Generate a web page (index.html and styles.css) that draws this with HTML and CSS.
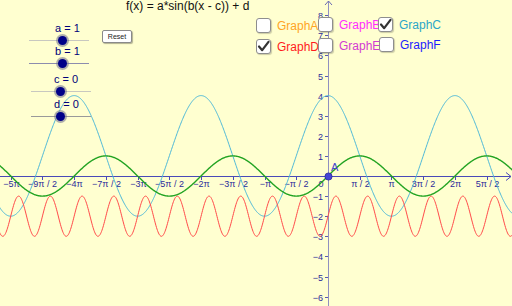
FILE: index.html
```html
<!DOCTYPE html>
<html>
<head>
<meta charset="utf-8">
<link rel="stylesheet" href="styles.css">
</head>
<body>
<div class="applet">
  <svg class="graph" id="graph" width="512" height="306" viewBox="0 0 512 306"></svg>

  <div class="title">f(x) = a*sin(b(x - c)) + d</div>

  <div class="slider slider-a">
    <span class="slider-label">a = 1</span>
    <div class="track track-light"><span class="knob knob-a"></span></div>
  </div>
  <div class="slider slider-b">
    <span class="slider-label">b = 1</span>
    <div class="track track-blue"><span class="knob knob-b"></span></div>
  </div>
  <div class="slider slider-c">
    <span class="slider-label">c = 0</span>
    <div class="track track-light"><span class="knob knob-c"></span></div>
  </div>
  <div class="slider slider-d">
    <span class="slider-label">d = 0</span>
    <div class="track track-dark"><span class="knob knob-d"></span></div>
  </div>

  <button class="reset">Reset</button>

  <div class="cb cb-a"><span class="box"></span><span class="cb-text text-a">GraphA</span></div>
  <div class="cb cb-b"><span class="box"></span><span class="cb-text text-b">GraphB</span></div>
  <div class="cb cb-c"><span class="box"><svg class="check" viewBox="0 0 15 15"><path d="M3 7.5 L6.2 11.2 L12.5 2.8"/></svg></span><span class="cb-text text-c">GraphC</span></div>
  <div class="cb cb-d"><span class="box"><svg class="check" viewBox="0 0 15 15"><path d="M3 7.5 L6.2 11.2 L12.5 2.8"/></svg></span><span class="cb-text text-d">GraphD</span></div>
  <div class="cb cb-e"><span class="box"></span><span class="cb-text text-e">GraphE</span></div>
  <div class="cb cb-f"><span class="box"></span><span class="cb-text text-f">GraphF</span></div>
</div>
<script src="script.js"></script>
</body>
</html>
```

FILE: styles.css
```css
html, body {
  margin: 0;
  padding: 0;
  background: #ffffd0;
}

.applet {
  position: relative;
  width: 512px;
  height: 306px;
  overflow: hidden;
  background: #ffffd0;
  font-family: "Liberation Sans", Arial, sans-serif;
}

.graph {
  position: absolute;
  left: 0;
  top: 0;
  display: block;
}

.axis-label {
  font-family: "Liberation Sans", Arial, sans-serif;
  font-size: 9px;
  fill: #2b2b9b;
}

.point-label {
  font-family: "Liberation Sans", Arial, sans-serif;
  font-size: 11px;
  fill: #4646cc;
}

.title {
  position: absolute;
  left: 126px;
  top: -1px;
  font-size: 12px;
  line-height: 14px;
  color: #111;
  white-space: nowrap;
}

/* sliders */
.slider {
  position: absolute;
  width: 60px;
  display: flex;
  flex-direction: column;
  gap: 6px;
}
.slider-a { left: 29px; top: 22px; }
.slider-b { left: 29px; top: 45px; }
.slider-c { left: 31px; top: 73px; }
.slider-d { left: 31px; top: 98px; }

.slider-label {
  display: block;
  height: 12px;
  line-height: 12px;
  font-size: 11px;
  color: #00007a;
  white-space: nowrap;
  padding-left: 26px;
}
.slider-c .slider-label,
.slider-d .slider-label { padding-left: 23px; }

.track {
  position: relative;
  height: 1px;
  width: 60px;
}
.track-light { background: #c8c8c0; }
.track-blue { background: #8c8cae; }
.track-dark { background: #9a9a9a; }

.knob {
  position: absolute;
  top: 0;
  width: 9px;
  height: 9px;
  margin-left: -4.5px;
  margin-top: -4px;
  border-radius: 50%;
  background: #000088;
  box-shadow: 0 0 0 2px rgba(110, 110, 140, 0.55);
}
.knob-a, .knob-b { left: 33px; }
.knob-c, .knob-d { left: 29px; }

/* reset button */
.reset {
  position: absolute;
  left: 102px;
  top: 30px;
  width: 30px;
  height: 13px;
  padding: 0;
  margin: 0;
  border: 1px solid #8a8a8a;
  border-radius: 2px;
  background: #ffffff;
  box-shadow: 1px 1px 1px rgba(0, 0, 0, 0.3);
  font-family: "Liberation Sans", Arial, sans-serif;
  font-size: 7px;
  line-height: 11px;
  color: #222;
}

/* checkboxes */
.cb {
  position: absolute;
  display: flex;
  align-items: center;
  gap: 6px;
  white-space: nowrap;
}
.cb-a { left: 256px; top: 18px; }
.cb-b { left: 318px; top: 17px; }
.cb-c { left: 378px; top: 17px; }
.cb-d { left: 256px; top: 39px; }
.cb-e { left: 318px; top: 38px; }
.cb-f { left: 379px; top: 37px; }

.box {
  position: relative;
  width: 13px;
  height: 13px;
  border: 1px solid #8e8e8e;
  border-radius: 3px;
  background: #ffffff;
  box-shadow: 1px 1px 1px rgba(0, 0, 0, 0.2);
  flex: none;
}
.check {
  position: absolute;
  left: -1px;
  top: -1px;
  width: 15px;
  height: 15px;
}
.check path {
  fill: none;
  stroke: #333333;
  stroke-width: 2.2;
  stroke-linecap: round;
  stroke-linejoin: round;
}

.cb-text {
  font-size: 12px;
  line-height: 14px;
}
.text-a { color: #ffa424; }
.text-b { color: #ff2cff; }
.text-c { color: #2aa6c8; }
.text-d { color: #ff1c1c; }
.text-e { color: #d23ad2; }
.text-f { color: #1c1cff; }
```

FILE: script.js
```js
(function () {
  var svg = document.getElementById('graph');
  var NS = 'http://www.w3.org/2000/svg';
  var ox = 328, oy = 176, sx = 20.2, sy = 20.1;

  function el(name, attrs, text) {
    var e = document.createElementNS(NS, name);
    for (var k in attrs) e.setAttribute(k, attrs[k]);
    if (text !== undefined) e.textContent = text;
    svg.appendChild(e);
    return e;
  }

  // axes
  el('line', { x1: 0, y1: oy + 0.5, x2: 511, y2: oy + 0.5, stroke: '#4a4ab8', 'stroke-width': 1 });
  el('polyline', { points: '506,172.5 511,176.5 506,180.5', fill: 'none', stroke: '#4a4ab8', 'stroke-width': 1 });
  el('line', { x1: ox + 0.5, y1: 1, x2: ox + 0.5, y2: 306, stroke: '#9090c0', 'stroke-width': 1 });
  el('polyline', { points: '325,5 328.5,1 332,5', fill: 'none', stroke: '#6a6ab0', 'stroke-width': 1 });

  // y ticks and labels
  for (var k = -6; k <= 8; k++) {
    if (k === 0) continue;
    var y = Math.round(oy - k * sy) + 0.5;
    el('line', { x1: 325, y1: y, x2: 328, y2: y, stroke: '#5a5ab0', 'stroke-width': 1 });
    el('text', { x: 323, y: y + 3.2, 'text-anchor': 'end', 'class': 'axis-label' }, (k < 0 ? '\u2212' : '') + Math.abs(k));
  }

  // x ticks and labels (multiples of pi/2)
  for (var n = -10; n <= 5; n++) {
    if (n === 0) continue;
    var px = Math.round(ox + n * Math.PI / 2 * sx) + 0.5;
    el('line', { x1: px, y1: oy + 0.5, x2: px, y2: oy + 4, stroke: '#4a4ab8', 'stroke-width': 1 });
    var sign = n < 0 ? '\u2212' : '';
    var a = Math.abs(n), label;
    if (a % 2 === 0) {
      var m = a / 2;
      label = sign + (m === 1 ? '' : m) + '\u03c0';
    } else {
      label = sign + (a === 1 ? '' : a) + '\u03c0 / 2';
    }
    el('text', { x: px, y: oy + 11, 'text-anchor': 'middle', 'class': 'axis-label' }, label);
  }
  el('text', { x: 321, y: oy + 11, 'text-anchor': 'middle', 'class': 'axis-label' }, '0');

  function curve(f, color, w) {
    var d = '';
    for (var p = -2; p <= 514; p += 0.5) {
      var x = (p - ox) / sx;
      var py = oy - f(x) * sy;
      d += (d ? 'L' : 'M') + p.toFixed(2) + ' ' + py.toFixed(2);
    }
    el('path', { d: d, fill: 'none', stroke: color, 'stroke-width': w, 'stroke-linejoin': 'round' });
  }

  curve(function (x) { return 3 * Math.cos(x) + 1; }, '#4cb8d8', 1);
  curve(function (x) { return Math.sin(4 * x) - 2; }, '#ff4a4a', 1);
  curve(function (x) { return Math.sin(x); }, '#22a322', 1.4);

  // point A
  el('circle', { cx: ox + 0.5, cy: oy + 0.5, r: 3.6, fill: '#4646d6', stroke: '#2a2a9a', 'stroke-width': 0.8 });
  el('text', { x: 331, y: 171, 'class': 'point-label' }, 'A');
})();
```
